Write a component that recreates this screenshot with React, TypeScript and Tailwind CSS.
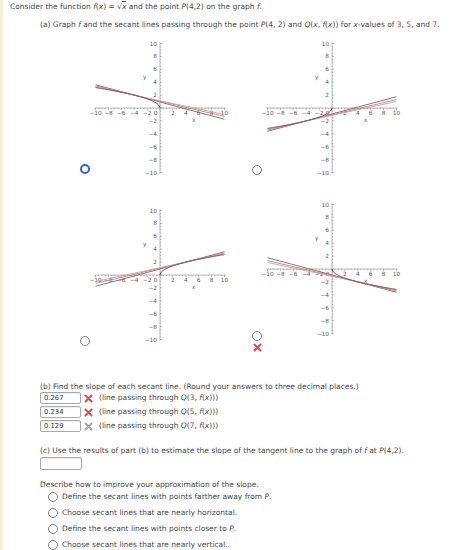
import React from "react";

const K = 6.45;
const O = 70;
const SLOPES = [3, 5, 7].map((q) => (Math.sqrt(q) - 2) / (q - 4));
const LINE_COLORS = ["#8e5f5f", "#b38686", "#c9a3a3"];

function Graph({ sx, sy }: { sx: number; sy: number }) {
  const px = (x: number) => O + sx * x * K;
  const py = (y: number) => O - sy * y * K;

  const curve = Array.from({ length: 101 }, (_, i) => {
    const x = (i / 100) * 10;
    return `${px(x).toFixed(2)},${py(Math.sqrt(x)).toFixed(2)}`;
  }).join(" ");

  const ticks: number[] = [];
  for (let v = -10; v <= 10; v += 0.5) ticks.push(v);
  const labels = [-10, -8, -6, -4, -2, 2, 4, 6, 8, 10];

  return (
    <svg width="140" height="140" viewBox="0 0 140 140" className="shrink-0">
      <g stroke="#8a8a8a" strokeWidth="0.6">
        <line x1={O - 10.2 * K} y1={O} x2={O + 10.2 * K} y2={O} />
        <line x1={O} y1={O - 10.2 * K} x2={O} y2={O + 10.2 * K} />
        {ticks.map((v) => (
          <g key={v}>
            <line x1={O + v * K} y1={O} x2={O + v * K} y2={O + (v % 2 === 0 ? 2.2 : 1.2)} />
            <line x1={O} y1={O - v * K} x2={O + (v % 2 === 0 ? 2.2 : 1.2)} y2={O - v * K} />
          </g>
        ))}
      </g>
      <g fill="#5a5a5a" fontSize="5.8" fontFamily="'DejaVu Sans', Verdana, sans-serif">
        {labels.map((v) => (
          <text key={"x" + v} x={O + v * K} y={O + 7} textAnchor="middle">
            {v < 0 ? "\u2212" + -v : v}
          </text>
        ))}
        {labels.map((v) => (
          <text key={"y" + v} x={O - 3} y={O - v * K + 2} textAnchor="end">
            {v < 0 ? "\u2212" + -v : v}
          </text>
        ))}
        <text x={O - 2.5} y={O + 7} textAnchor="end">0</text>
        <text x={O - 17} y={O - 29}>y</text>
        <text x={O + 32} y={O + 14}>x</text>
      </g>
      <g fill="none" strokeWidth="0.9">
        {SLOPES.map((m, i) => (
          <line
            key={i}
            x1={px(-10)}
            y1={py(2 + m * (-10 - 4))}
            x2={px(10)}
            y2={py(2 + m * (10 - 4))}
            stroke={LINE_COLORS[i]}
          />
        ))}
        <polyline points={curve} stroke="#7a4a4a" strokeWidth="1" />
      </g>
    </svg>
  );
}

function Radio({ selected = false }: { selected?: boolean }) {
  return selected ? (
    <div className="w-[10px] h-[10px] rounded-full border-[2.5px] border-[#2f5fe0] bg-white shrink-0" />
  ) : (
    <div className="w-[10px] h-[10px] rounded-full border border-[#7d7d7d] bg-white shrink-0" />
  );
}

function Cross({ color }: { color: string }) {
  return (
    <svg width="9" height="9" viewBox="0 0 9 9" className="shrink-0">
      <path d="M1.5 1.5 L7.5 7.5 M7.5 1.5 L1.5 7.5" stroke={color} strokeWidth="2" strokeLinecap="round" />
    </svg>
  );
}

const I = ({ children }: { children: React.ReactNode }) => <i>{children}</i>;
const R = ({ children }: { children: React.ReactNode }) => <span className="text-[#c8373a]">{children}</span>;

function Box({ value }: { value?: string }) {
  return (
    <div className="w-[41px] h-[12px] border border-[#a9a9a9] rounded-[2px] bg-white shadow-[inset_0_1px_1px_rgba(0,0,0,0.08)] px-[3px] flex items-center text-[6.8px] text-[#333]">
      {value}
    </div>
  );
}

const SECANTS = [
  { v: "0.267", q: "3", c: "#de4b4b" },
  { v: "0.234", q: "5", c: "#de4b4b" },
  { v: "0.129", q: "7", c: "#a3a3a3" },
];

const OPTIONS = [
  <>Define the secant lines with points farther away from <I>P</I>.</>,
  <>Choose secant lines that are nearly horizontal.</>,
  <>Define the secant lines with points closer to <I>P</I>.</>,
  <>Choose secant lines that are nearly vertical.</>,
];

export default function App() {
  return (
    <div
      className="w-[474px] h-[550px] bg-white border-l-[3px] border-[#f1f0d8] overflow-hidden text-[7.5px] leading-[10px] text-[#474747]"
      style={{ fontFamily: "'DejaVu Sans', Verdana, sans-serif" }}
    >
      <div className="pl-[7px] pt-[2px]">
        <p>
          Consider the function <I>f</I>(<I>x</I>) = √<span className="border-t border-[#444]"><I>x</I></span> and the point <I>P</I>(4,2) on the graph <I>f</I>.
        </p>
        <div className="pl-[30px]">
          <p className="mt-[8px]">
            (a) Graph <I>f</I> and the secant lines passing through the point <I>P</I>(4, 2) and <I>Q</I>(<I>x</I>, <I>f</I>(<I>x</I>)) for <I>x</I>-values of <R>3</R>, <R>5</R>, and <R>7</R>.
          </p>

          {/* graphs */}
          <div className="ml-[40px] mt-[8px] flex">
            <div className="w-[172px] flex items-end">
              <div className="mb-[4px]"><Radio selected /></div>
              <Graph sx={-1} sy={1} />
            </div>
            <div className="w-[172px] flex items-end">
              <div className="mb-[3px]"><Radio /></div>
              <Graph sx={-1} sy={-1} />
            </div>
          </div>
          <div className="ml-[40px] mt-[21px] flex items-start">
            <div className="w-[172px] pt-[6px] flex items-end">
              <div className="mb-[-1px]"><Radio /></div>
              <Graph sx={1} sy={1} />
            </div>
            <div className="w-[172px] flex items-end">
              <div className="flex flex-col items-center gap-[2px]">
                <Radio />
                <Cross color="#de4b4b" />
              </div>
              <div className="mb-[13px]">
                <Graph sx={1} sy={-1} />
              </div>
            </div>
          </div>

          {/* part b */}
          <p className="mt-[30px]">
            (b) Find the slope of each secant line. (Round your answers to three decimal places.)
          </p>
          <div className="flex flex-col gap-[2px]">
            {SECANTS.map((s) => (
              <div key={s.q} className="flex items-center">
                <Box value={s.v} />
                <div className="ml-[3px] mr-[6px]"><Cross color={s.c} /></div>
                <span>
                  (line passing through <I>Q</I>(<R>{s.q}</R>, <I>f</I>(<I>x</I>)))
                </span>
              </div>
            ))}
          </div>

          {/* part c */}
          <p className="mt-[14px]">
            (c) Use the results of part (b) to estimate the slope of the tangent line to the graph of <I>f</I> at <I>P</I>(4,2).
          </p>
          <div className="mt-[1px]">
            <div className="w-[42px] h-[13px] border border-[#a9a9a9] rounded-[2px] bg-white shadow-[inset_0_1px_1px_rgba(0,0,0,0.08)]" />
          </div>

          <p className="mt-[10px]">Describe how to improve your approximation of the slope.</p>
          <div className="pl-[8px] mt-[2px] flex flex-col gap-[6px]">
            {OPTIONS.map((o, i) => (
              <div key={i} className="flex items-center gap-[4px]">
                <Radio />
                <span>{o}</span>
              </div>
            ))}
          </div>
        </div>
      </div>
    </div>
  );
}
